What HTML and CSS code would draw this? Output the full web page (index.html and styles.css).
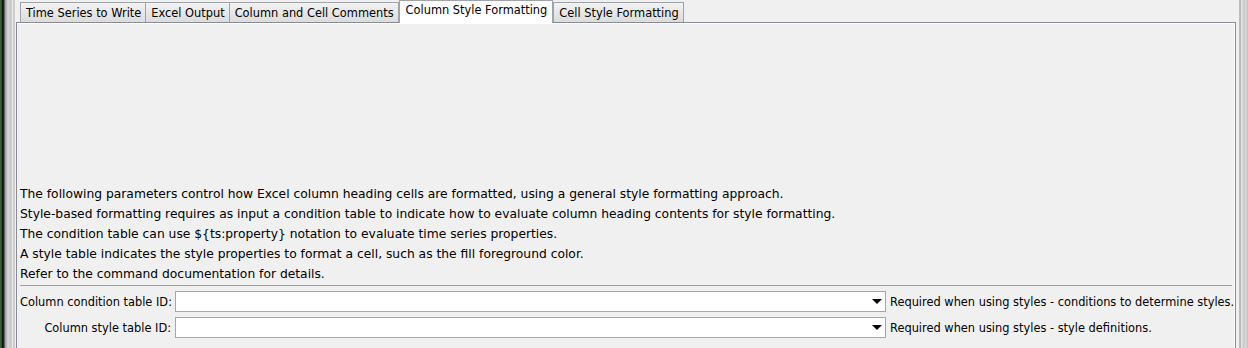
FILE: index.html
```html
<!DOCTYPE html>
<html lang="en">
<head>
    <meta charset="UTF-8">
    <title>Column Style Formatting</title>
    <link rel="stylesheet" href="styles.css">
</head>
<body>
    <div class="frame">
        <div class="edge-left"></div>
        <div class="main">
            <div class="tabs">
                <div class="tab">Time Series to Write</div>
                <div class="tab">Excel Output</div>
                <div class="tab">Column and Cell Comments</div>
                <div class="tab active">Column Style Formatting</div>
                <div class="tab">Cell Style Formatting</div>
            </div>
            <div class="panel">
                <div class="notes">
                    <p>The following parameters control how Excel column heading cells are formatted, using a general style formatting approach.</p>
                    <p>Style-based formatting requires as input a condition table to indicate how to evaluate column heading contents for style formatting.</p>
                    <p>The condition table can use ${ts:property} notation to evaluate time series properties.</p>
                    <p>A style table indicates the style properties to format a cell, such as the fill foreground color.</p>
                    <p>Refer to the command documentation for details.</p>
                </div>
                <div class="fields">
                    <label class="field-label">Column condition table ID:</label>
                    <div class="combo"><span class="arrow"></span></div>
                    <span class="hint">Required when using styles - conditions to determine styles.</span>

                    <label class="field-label">Column style table ID:</label>
                    <div class="combo"><span class="arrow"></span></div>
                    <span class="hint">Required when using styles - style definitions.</span>
                </div>
            </div>
        </div>
        <div class="edge-right"></div>
    </div>
</body>
</html>
```

FILE: styles.css
```css
* {
    margin: 0;
    padding: 0;
    box-sizing: border-box;
}

html, body {
    height: 100%;
    overflow: hidden;
}

body {
    background: #f0f0f0;
    font-family: "DejaVu Sans", Verdana, sans-serif;
    font-size: 12.3px;
    color: #000;
}

.frame {
    display: flex;
    height: 348px;
}

.edge-left {
    width: 16px;
    flex: none;
    background: linear-gradient(to right, #2b3a2b 0, #3f8a3f 1px, #111 2px, #222 4px, #9a9a9a 5px, #d8d8d8 8px, #c4c4c4 11px, #f4f4f4 13px, #a8a8a8 14px, #f0f0f0 15px);
}

.main {
    flex: 1;
    display: flex;
    flex-direction: column;
    padding-top: 2px;
}

.tabs {
    display: flex;
    height: 20px;
    padding-left: 4px;
    align-items: flex-end;
    font-size: 11.4px;
}

.tab {
    height: 20px;
    padding: 2px 4px 0 5px;
    border: 1px solid #a0a3a9;
    border-bottom: none;
    margin-right: -1px;
    background: linear-gradient(to bottom, #f2f2f2, #dcdcdc);
    white-space: nowrap;
    line-height: 16px;
}

.tab.active {
    height: 23px;
    margin-bottom: -1px;
    margin-top: -2px;
    padding: 1px 5px 0 6px;
    background: #fff;
    position: relative;
    z-index: 1;
    margin-left: 1px;
    margin-right: 0;
}

.panel {
    flex: 1;
    width: 1220px;
    border: 1px solid #898c95;
    border-bottom: none;
    box-shadow: inset 0 1px 0 #fff, inset -1px 0 0 #fff;
    background: #f0f0f0;
    padding: 161px 0 0 3px;
}

.notes {
    border-bottom: 1px solid #a0a0a0;
    margin-right: 3px;
    padding-bottom: 1px;
}

.notes p {
    height: 20px;
    line-height: 20px;
}

.fields {
    display: grid;
    grid-template-columns: 151px 711px auto;
    column-gap: 4px;
    row-gap: 5px;
    padding-top: 5px;
    align-items: center;
    font-size: 11.4px;
}

.field-label {
    text-align: right;
    white-space: nowrap;
}

.combo {
    height: 21px;
    background: #fff;
    border: 1px solid #a7a7a7;
    position: relative;
}

.arrow {
    position: absolute;
    right: 3px;
    top: 7px;
    width: 0;
    height: 0;
    border-left: 5px solid transparent;
    border-right: 5px solid transparent;
    border-top: 5px solid #000;
}

.hint {
    white-space: nowrap;
}

.edge-right {
    width: 12px;
    flex: none;
    background: linear-gradient(to right, #f0f0f0 0, #f0f0f0 3px, #8a8a8a 4px, #e8e8e8 5px, #c8c8c8 8px, #dadada 10px, #bdbdbd 12px);
}
```
